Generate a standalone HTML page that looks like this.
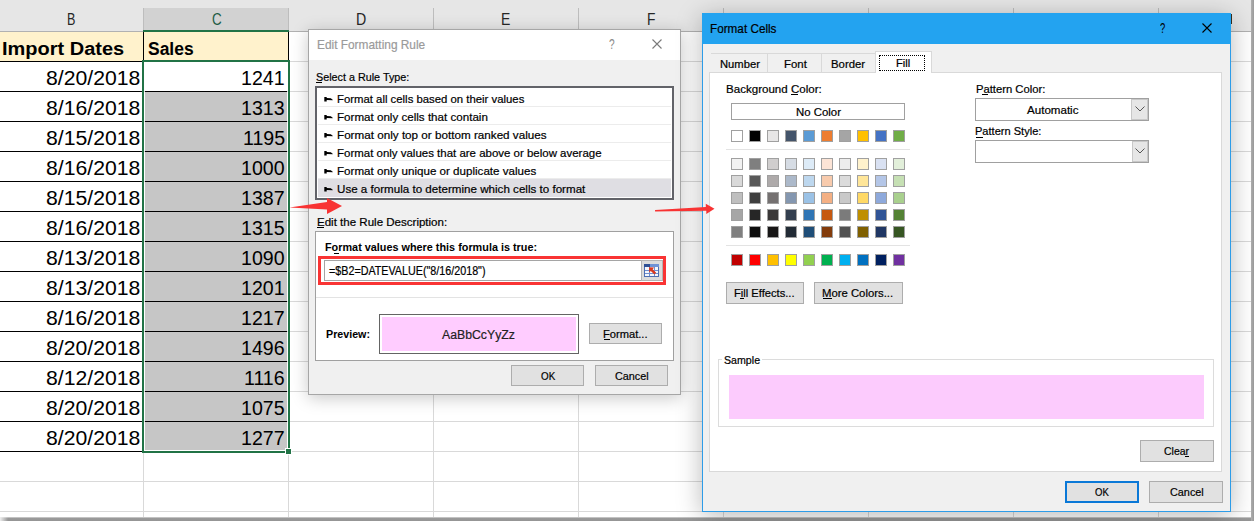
<!DOCTYPE html>
<html><head><meta charset="utf-8"><style>
html,body{margin:0;padding:0;}
body{width:1254px;height:521px;position:relative;overflow:hidden;background:#fff;font-family:'Liberation Sans', sans-serif;}
</style></head><body>
<div style="position:absolute;left:0px;top:0px;width:1254px;height:31px;background:#e6e6e6"></div>
<div style="position:absolute;left:0px;top:31px;width:1254px;height:1px;background:#b1b1b1"></div>
<div style="position:absolute;left:143px;top:8px;width:1px;height:23px;background:#bdbdbd"></div>
<div style="position:absolute;left:288px;top:8px;width:1px;height:23px;background:#bdbdbd"></div>
<div style="position:absolute;left:433px;top:8px;width:1px;height:23px;background:#bdbdbd"></div>
<div style="position:absolute;left:578px;top:8px;width:1px;height:23px;background:#bdbdbd"></div>
<div style="position:absolute;left:723px;top:8px;width:1px;height:23px;background:#bdbdbd"></div>
<div style="position:absolute;left:868px;top:8px;width:1px;height:23px;background:#bdbdbd"></div>
<div style="position:absolute;left:1013px;top:8px;width:1px;height:23px;background:#bdbdbd"></div>
<div style="position:absolute;left:1158px;top:8px;width:1px;height:23px;background:#bdbdbd"></div>
<div style="position:absolute;left:144px;top:8px;width:144px;height:22px;background:#d2d2d2"></div>
<div style="position:absolute;left:143px;top:30px;width:146px;height:2px;background:#217346"></div>
<div style="position:absolute;left:143px;top:32px;width:1px;height:489px;background:#d9d9d9"></div>
<div style="position:absolute;left:288px;top:32px;width:1px;height:489px;background:#d9d9d9"></div>
<div style="position:absolute;left:433px;top:32px;width:1px;height:489px;background:#d9d9d9"></div>
<div style="position:absolute;left:578px;top:32px;width:1px;height:489px;background:#d9d9d9"></div>
<div style="position:absolute;left:723px;top:32px;width:1px;height:489px;background:#d9d9d9"></div>
<div style="position:absolute;left:868px;top:32px;width:1px;height:489px;background:#d9d9d9"></div>
<div style="position:absolute;left:1013px;top:32px;width:1px;height:489px;background:#d9d9d9"></div>
<div style="position:absolute;left:1158px;top:32px;width:1px;height:489px;background:#d9d9d9"></div>
<div style="position:absolute;left:0px;top:61px;width:1254px;height:1px;background:#d9d9d9"></div>
<div style="position:absolute;left:0px;top:91px;width:1254px;height:1px;background:#d9d9d9"></div>
<div style="position:absolute;left:0px;top:121px;width:1254px;height:1px;background:#d9d9d9"></div>
<div style="position:absolute;left:0px;top:151px;width:1254px;height:1px;background:#d9d9d9"></div>
<div style="position:absolute;left:0px;top:181px;width:1254px;height:1px;background:#d9d9d9"></div>
<div style="position:absolute;left:0px;top:211px;width:1254px;height:1px;background:#d9d9d9"></div>
<div style="position:absolute;left:0px;top:241px;width:1254px;height:1px;background:#d9d9d9"></div>
<div style="position:absolute;left:0px;top:271px;width:1254px;height:1px;background:#d9d9d9"></div>
<div style="position:absolute;left:0px;top:301px;width:1254px;height:1px;background:#d9d9d9"></div>
<div style="position:absolute;left:0px;top:331px;width:1254px;height:1px;background:#d9d9d9"></div>
<div style="position:absolute;left:0px;top:361px;width:1254px;height:1px;background:#d9d9d9"></div>
<div style="position:absolute;left:0px;top:391px;width:1254px;height:1px;background:#d9d9d9"></div>
<div style="position:absolute;left:0px;top:421px;width:1254px;height:1px;background:#d9d9d9"></div>
<div style="position:absolute;left:0px;top:451px;width:1254px;height:1px;background:#d9d9d9"></div>
<div style="position:absolute;left:0px;top:481px;width:1254px;height:1px;background:#d9d9d9"></div>
<div style="position:absolute;left:0px;top:511px;width:1254px;height:1px;background:#d9d9d9"></div>
<div id="t0" style="position:absolute;left:67.40px;top:12px;font:15.75px/15.75px 'Liberation Sans', sans-serif;color:#262626;white-space:pre;transform:scaleX(0.8000);transform-origin:0 0;">B<i style="display:inline-block;width:0;height:0"></i></div>
<div id="t1" style="position:absolute;left:211.70px;top:12px;font:15.75px/15.75px 'Liberation Sans', sans-serif;color:#1e5c45;white-space:pre;transform:scaleX(0.8545);transform-origin:0 0;">C<i style="display:inline-block;width:0;height:0"></i></div>
<div id="t2" style="position:absolute;left:356.10px;top:12px;font:15.75px/15.75px 'Liberation Sans', sans-serif;color:#262626;white-space:pre;transform:scaleX(0.9000);transform-origin:0 0;">D<i style="display:inline-block;width:0;height:0"></i></div>
<div id="t3" style="position:absolute;left:501.11px;top:12px;font:15.75px/15.75px 'Liberation Sans', sans-serif;color:#262626;white-space:pre;transform:scaleX(0.8889);transform-origin:0 0;">E<i style="display:inline-block;width:0;height:0"></i></div>
<div id="t4" style="position:absolute;left:647.12px;top:12px;font:15.75px/15.75px 'Liberation Sans', sans-serif;color:#262626;white-space:pre;transform:scaleX(0.8750);transform-origin:0 0;">F<i style="display:inline-block;width:0;height:0"></i></div>
<div style="position:absolute;left:1231px;top:14px;width:1px;height:10px;background:#3a3020"></div>
<div style="position:absolute;left:0px;top:32px;width:143px;height:29px;background:#fff2cc"></div>
<div style="position:absolute;left:144px;top:32px;width:144px;height:29px;background:#fff2cc"></div>
<div style="position:absolute;left:143px;top:32px;width:1px;height:30px;background:#000"></div>
<div style="position:absolute;left:288px;top:32px;width:1px;height:30px;background:#000"></div>
<div style="position:absolute;left:0px;top:61px;width:143px;height:1px;background:#000"></div>
<div id="t5" style="position:absolute;left:1.96px;top:39px;font:bold 19.25px/19.25px 'Liberation Sans', sans-serif;color:#000;white-space:pre;transform:scaleX(1.0383);transform-origin:0 0;">Import Dates<i style="display:inline-block;width:0;height:0"></i></div>
<div id="t6" style="position:absolute;left:147.70px;top:39px;font:bold 19.25px/19.25px 'Liberation Sans', sans-serif;color:#000;white-space:pre;transform:scaleX(0.9073);transform-origin:0 0;">Sales<i style="display:inline-block;width:0;height:0"></i></div>
<div style="position:absolute;left:0px;top:91px;width:143px;height:1px;background:#000"></div>
<div style="position:absolute;left:143px;top:62px;width:145px;height:29px;background:#fff"></div>
<div style="position:absolute;left:145px;top:91px;width:142px;height:1px;background:#000"></div>
<div id="t7" style="position:absolute;left:45.70px;top:68px;font:20.5px/20.5px 'Liberation Sans', sans-serif;color:#000;white-space:pre;transform:scaleX(1.0342);transform-origin:0 0;">8/20/2018<i style="display:inline-block;width:0;height:0"></i></div>
<div id="t8" style="position:absolute;left:241.23px;top:68px;font:20.5px/20.5px 'Liberation Sans', sans-serif;color:#000;white-space:pre;transform:scaleX(0.9550);transform-origin:0 0;">1241<i style="display:inline-block;width:0;height:0"></i></div>
<div style="position:absolute;left:0px;top:121px;width:143px;height:1px;background:#000"></div>
<div style="position:absolute;left:143px;top:92px;width:145px;height:29px;background:#fff"></div>
<div style="position:absolute;left:145px;top:92px;width:142px;height:29px;background:#c6c6c6"></div>
<div style="position:absolute;left:145px;top:121px;width:142px;height:1px;background:#000"></div>
<div id="t9" style="position:absolute;left:45.70px;top:98px;font:20.5px/20.5px 'Liberation Sans', sans-serif;color:#000;white-space:pre;transform:scaleX(1.0342);transform-origin:0 0;">8/16/2018<i style="display:inline-block;width:0;height:0"></i></div>
<div id="t10" style="position:absolute;left:241.23px;top:98px;font:20.5px/20.5px 'Liberation Sans', sans-serif;color:#000;white-space:pre;transform:scaleX(0.9550);transform-origin:0 0;">1313<i style="display:inline-block;width:0;height:0"></i></div>
<div style="position:absolute;left:0px;top:151px;width:143px;height:1px;background:#000"></div>
<div style="position:absolute;left:143px;top:122px;width:145px;height:29px;background:#fff"></div>
<div style="position:absolute;left:145px;top:122px;width:142px;height:29px;background:#c6c6c6"></div>
<div style="position:absolute;left:145px;top:151px;width:142px;height:1px;background:#000"></div>
<div id="t11" style="position:absolute;left:45.70px;top:128px;font:20.5px/20.5px 'Liberation Sans', sans-serif;color:#000;white-space:pre;transform:scaleX(1.0342);transform-origin:0 0;">8/15/2018<i style="display:inline-block;width:0;height:0"></i></div>
<div id="t12" style="position:absolute;left:242.68px;top:128px;font:20.5px/20.5px 'Liberation Sans', sans-serif;color:#000;white-space:pre;transform:scaleX(0.9550);transform-origin:0 0;">1195<i style="display:inline-block;width:0;height:0"></i></div>
<div style="position:absolute;left:0px;top:181px;width:143px;height:1px;background:#000"></div>
<div style="position:absolute;left:143px;top:152px;width:145px;height:29px;background:#fff"></div>
<div style="position:absolute;left:145px;top:152px;width:142px;height:29px;background:#c6c6c6"></div>
<div style="position:absolute;left:145px;top:181px;width:142px;height:1px;background:#000"></div>
<div id="t13" style="position:absolute;left:45.70px;top:158px;font:20.5px/20.5px 'Liberation Sans', sans-serif;color:#000;white-space:pre;transform:scaleX(1.0342);transform-origin:0 0;">8/16/2018<i style="display:inline-block;width:0;height:0"></i></div>
<div id="t14" style="position:absolute;left:241.23px;top:158px;font:20.5px/20.5px 'Liberation Sans', sans-serif;color:#000;white-space:pre;transform:scaleX(0.9550);transform-origin:0 0;">1000<i style="display:inline-block;width:0;height:0"></i></div>
<div style="position:absolute;left:0px;top:211px;width:143px;height:1px;background:#000"></div>
<div style="position:absolute;left:143px;top:182px;width:145px;height:29px;background:#fff"></div>
<div style="position:absolute;left:145px;top:182px;width:142px;height:29px;background:#c6c6c6"></div>
<div style="position:absolute;left:145px;top:211px;width:142px;height:1px;background:#000"></div>
<div id="t15" style="position:absolute;left:45.70px;top:188px;font:20.5px/20.5px 'Liberation Sans', sans-serif;color:#000;white-space:pre;transform:scaleX(1.0342);transform-origin:0 0;">8/15/2018<i style="display:inline-block;width:0;height:0"></i></div>
<div id="t16" style="position:absolute;left:241.23px;top:188px;font:20.5px/20.5px 'Liberation Sans', sans-serif;color:#000;white-space:pre;transform:scaleX(0.9550);transform-origin:0 0;">1387<i style="display:inline-block;width:0;height:0"></i></div>
<div style="position:absolute;left:0px;top:241px;width:143px;height:1px;background:#000"></div>
<div style="position:absolute;left:143px;top:212px;width:145px;height:29px;background:#fff"></div>
<div style="position:absolute;left:145px;top:212px;width:142px;height:29px;background:#c6c6c6"></div>
<div style="position:absolute;left:145px;top:241px;width:142px;height:1px;background:#000"></div>
<div id="t17" style="position:absolute;left:45.70px;top:218px;font:20.5px/20.5px 'Liberation Sans', sans-serif;color:#000;white-space:pre;transform:scaleX(1.0342);transform-origin:0 0;">8/16/2018<i style="display:inline-block;width:0;height:0"></i></div>
<div id="t18" style="position:absolute;left:241.23px;top:218px;font:20.5px/20.5px 'Liberation Sans', sans-serif;color:#000;white-space:pre;transform:scaleX(0.9550);transform-origin:0 0;">1315<i style="display:inline-block;width:0;height:0"></i></div>
<div style="position:absolute;left:0px;top:271px;width:143px;height:1px;background:#000"></div>
<div style="position:absolute;left:143px;top:242px;width:145px;height:29px;background:#fff"></div>
<div style="position:absolute;left:145px;top:242px;width:142px;height:29px;background:#c6c6c6"></div>
<div style="position:absolute;left:145px;top:271px;width:142px;height:1px;background:#000"></div>
<div id="t19" style="position:absolute;left:45.70px;top:248px;font:20.5px/20.5px 'Liberation Sans', sans-serif;color:#000;white-space:pre;transform:scaleX(1.0342);transform-origin:0 0;">8/13/2018<i style="display:inline-block;width:0;height:0"></i></div>
<div id="t20" style="position:absolute;left:241.23px;top:248px;font:20.5px/20.5px 'Liberation Sans', sans-serif;color:#000;white-space:pre;transform:scaleX(0.9550);transform-origin:0 0;">1090<i style="display:inline-block;width:0;height:0"></i></div>
<div style="position:absolute;left:0px;top:301px;width:143px;height:1px;background:#000"></div>
<div style="position:absolute;left:143px;top:272px;width:145px;height:29px;background:#fff"></div>
<div style="position:absolute;left:145px;top:272px;width:142px;height:29px;background:#c6c6c6"></div>
<div style="position:absolute;left:145px;top:301px;width:142px;height:1px;background:#000"></div>
<div id="t21" style="position:absolute;left:45.70px;top:278px;font:20.5px/20.5px 'Liberation Sans', sans-serif;color:#000;white-space:pre;transform:scaleX(1.0342);transform-origin:0 0;">8/13/2018<i style="display:inline-block;width:0;height:0"></i></div>
<div id="t22" style="position:absolute;left:241.23px;top:278px;font:20.5px/20.5px 'Liberation Sans', sans-serif;color:#000;white-space:pre;transform:scaleX(0.9550);transform-origin:0 0;">1201<i style="display:inline-block;width:0;height:0"></i></div>
<div style="position:absolute;left:0px;top:331px;width:143px;height:1px;background:#000"></div>
<div style="position:absolute;left:143px;top:302px;width:145px;height:29px;background:#fff"></div>
<div style="position:absolute;left:145px;top:302px;width:142px;height:29px;background:#c6c6c6"></div>
<div style="position:absolute;left:145px;top:331px;width:142px;height:1px;background:#000"></div>
<div id="t23" style="position:absolute;left:45.70px;top:308px;font:20.5px/20.5px 'Liberation Sans', sans-serif;color:#000;white-space:pre;transform:scaleX(1.0342);transform-origin:0 0;">8/16/2018<i style="display:inline-block;width:0;height:0"></i></div>
<div id="t24" style="position:absolute;left:241.23px;top:308px;font:20.5px/20.5px 'Liberation Sans', sans-serif;color:#000;white-space:pre;transform:scaleX(0.9550);transform-origin:0 0;">1217<i style="display:inline-block;width:0;height:0"></i></div>
<div style="position:absolute;left:0px;top:361px;width:143px;height:1px;background:#000"></div>
<div style="position:absolute;left:143px;top:332px;width:145px;height:29px;background:#fff"></div>
<div style="position:absolute;left:145px;top:332px;width:142px;height:29px;background:#c6c6c6"></div>
<div style="position:absolute;left:145px;top:361px;width:142px;height:1px;background:#000"></div>
<div id="t25" style="position:absolute;left:45.70px;top:338px;font:20.5px/20.5px 'Liberation Sans', sans-serif;color:#000;white-space:pre;transform:scaleX(1.0342);transform-origin:0 0;">8/20/2018<i style="display:inline-block;width:0;height:0"></i></div>
<div id="t26" style="position:absolute;left:241.23px;top:338px;font:20.5px/20.5px 'Liberation Sans', sans-serif;color:#000;white-space:pre;transform:scaleX(0.9550);transform-origin:0 0;">1496<i style="display:inline-block;width:0;height:0"></i></div>
<div style="position:absolute;left:0px;top:391px;width:143px;height:1px;background:#000"></div>
<div style="position:absolute;left:143px;top:362px;width:145px;height:29px;background:#fff"></div>
<div style="position:absolute;left:145px;top:362px;width:142px;height:29px;background:#c6c6c6"></div>
<div style="position:absolute;left:145px;top:391px;width:142px;height:1px;background:#000"></div>
<div id="t27" style="position:absolute;left:45.70px;top:368px;font:20.5px/20.5px 'Liberation Sans', sans-serif;color:#000;white-space:pre;transform:scaleX(1.0342);transform-origin:0 0;">8/12/2018<i style="display:inline-block;width:0;height:0"></i></div>
<div id="t28" style="position:absolute;left:244.14px;top:368px;font:20.5px/20.5px 'Liberation Sans', sans-serif;color:#000;white-space:pre;transform:scaleX(0.9550);transform-origin:0 0;">1116<i style="display:inline-block;width:0;height:0"></i></div>
<div style="position:absolute;left:0px;top:421px;width:143px;height:1px;background:#000"></div>
<div style="position:absolute;left:143px;top:392px;width:145px;height:29px;background:#fff"></div>
<div style="position:absolute;left:145px;top:392px;width:142px;height:29px;background:#c6c6c6"></div>
<div style="position:absolute;left:145px;top:421px;width:142px;height:1px;background:#000"></div>
<div id="t29" style="position:absolute;left:45.70px;top:398px;font:20.5px/20.5px 'Liberation Sans', sans-serif;color:#000;white-space:pre;transform:scaleX(1.0342);transform-origin:0 0;">8/20/2018<i style="display:inline-block;width:0;height:0"></i></div>
<div id="t30" style="position:absolute;left:241.23px;top:398px;font:20.5px/20.5px 'Liberation Sans', sans-serif;color:#000;white-space:pre;transform:scaleX(0.9550);transform-origin:0 0;">1075<i style="display:inline-block;width:0;height:0"></i></div>
<div style="position:absolute;left:0px;top:451px;width:143px;height:1px;background:#000"></div>
<div style="position:absolute;left:143px;top:422px;width:145px;height:29px;background:#fff"></div>
<div style="position:absolute;left:145px;top:422px;width:142px;height:28px;background:#c6c6c6"></div>
<div id="t31" style="position:absolute;left:45.70px;top:428px;font:20.5px/20.5px 'Liberation Sans', sans-serif;color:#000;white-space:pre;transform:scaleX(1.0342);transform-origin:0 0;">8/20/2018<i style="display:inline-block;width:0;height:0"></i></div>
<div id="t32" style="position:absolute;left:241.23px;top:428px;font:20.5px/20.5px 'Liberation Sans', sans-serif;color:#000;white-space:pre;transform:scaleX(0.9550);transform-origin:0 0;">1277<i style="display:inline-block;width:0;height:0"></i></div>
<div style="position:absolute;left:142px;top:60px;width:148px;height:2px;background:#217346"></div>
<div style="position:absolute;left:142px;top:60px;width:2px;height:393px;background:#217346"></div>
<div style="position:absolute;left:288px;top:60px;width:2px;height:388px;background:#217346"></div>
<div style="position:absolute;left:142px;top:451px;width:143px;height:2px;background:#217346"></div>
<div style="position:absolute;left:285px;top:448px;width:7px;height:7px;background:#fff"></div>
<div style="position:absolute;left:286px;top:449px;width:5px;height:5px;background:#217346"></div>
<div style="position:absolute;left:0px;top:517px;width:1254px;height:4px;background:linear-gradient(#d8d8d8,#9a9a9a 35%,#959595)"></div>
<div style="position:absolute;left:0px;top:517px;width:8px;height:4px;background:linear-gradient(90deg,#eeeeee,rgba(238,238,238,0))"></div>
<div style="position:absolute;left:1251px;top:0px;width:3px;height:521px;background:linear-gradient(90deg,#b0b0b0,#9a9a9a)"></div>
<div style="position:absolute;left:308px;top:29px;width:373px;height:366px;box-sizing:border-box;border:1px solid #a6a6a6;background:#f0f0f0;box-shadow:0 3px 16px rgba(0,0,0,0.22)"></div>
<div style="position:absolute;left:309px;top:30px;width:371px;height:30px;background:#fff"></div>
<div id="t33" style="position:absolute;left:316.79px;top:38px;font:13.0px/13.0px 'Liberation Sans', sans-serif;color:#9a9a9a;white-space:pre;transform:scaleX(0.9133);transform-origin:0 0;-webkit-text-stroke:0.2px #9a9a9a;">Edit Formatting Rule<i style="display:inline-block;width:0;height:0"></i></div>
<div id="t34" style="position:absolute;left:609.40px;top:37px;font:14.25px/14.25px 'Liberation Sans', sans-serif;color:#8a8a8a;white-space:pre;transform:scaleX(0.7125);transform-origin:0 0;">?<i style="display:inline-block;width:0;height:0"></i></div>
<svg style="position:absolute;left:652px;top:39px" width="10" height="10"><path d="M0.5 0.5L9.5 9.5M9.5 0.5L0.5 9.5" stroke="#7a7a7a" stroke-width="1.1"/></svg>
<div id="t35" style="position:absolute;left:316.20px;top:72px;font:11.5px/11.5px 'Liberation Sans', sans-serif;color:#000;white-space:pre;transform:scaleX(0.9374);transform-origin:0 0;-webkit-text-stroke:0.2px #000;">Select a Rule Type:<i style="display:inline-block;width:0;height:0"></i></div>
<div style="position:absolute;left:316px;top:82px;width:6px;height:1px;background:#000"></div>
<div style="position:absolute;left:315px;top:86px;width:359px;height:114px;box-sizing:border-box;border:2px solid #626369;background:#fff"></div>
<div style="position:absolute;left:318px;top:179px;width:353px;height:18px;background:#dfdee3"></div>
<div style="position:absolute;left:318px;top:106px;width:353px;height:1px;background:#ececec"></div>
<svg style="position:absolute;left:324px;top:96.5px" width="9" height="5"><path d="M0.3 0.1H2.7V1.1L6.8 1.3L8.7 2.7V3.2L2.7 3.1V4.4H0.3Z" fill="#000"/></svg>
<div id="t36" style="position:absolute;left:336.60px;top:94px;font:11.25px/11.25px 'Liberation Sans', sans-serif;color:#000;white-space:pre;transform:scaleX(1.0087);transform-origin:0 0;-webkit-text-stroke:0.2px #000;">Format all cells based on their values<i style="display:inline-block;width:0;height:0"></i></div>
<div style="position:absolute;left:318px;top:124px;width:353px;height:1px;background:#ececec"></div>
<svg style="position:absolute;left:324px;top:114.5px" width="9" height="5"><path d="M0.3 0.1H2.7V1.1L6.8 1.3L8.7 2.7V3.2L2.7 3.1V4.4H0.3Z" fill="#000"/></svg>
<div id="t37" style="position:absolute;left:336.60px;top:112px;font:11.25px/11.25px 'Liberation Sans', sans-serif;color:#000;white-space:pre;transform:scaleX(1.0311);transform-origin:0 0;-webkit-text-stroke:0.2px #000;">Format only cells that contain<i style="display:inline-block;width:0;height:0"></i></div>
<div style="position:absolute;left:318px;top:142px;width:353px;height:1px;background:#ececec"></div>
<svg style="position:absolute;left:324px;top:132.5px" width="9" height="5"><path d="M0.3 0.1H2.7V1.1L6.8 1.3L8.7 2.7V3.2L2.7 3.1V4.4H0.3Z" fill="#000"/></svg>
<div id="t38" style="position:absolute;left:336.60px;top:130px;font:11.25px/11.25px 'Liberation Sans', sans-serif;color:#000;white-space:pre;transform:scaleX(1.0378);transform-origin:0 0;-webkit-text-stroke:0.2px #000;">Format only top or bottom ranked values<i style="display:inline-block;width:0;height:0"></i></div>
<div style="position:absolute;left:318px;top:160px;width:353px;height:1px;background:#ececec"></div>
<svg style="position:absolute;left:324px;top:150.5px" width="9" height="5"><path d="M0.3 0.1H2.7V1.1L6.8 1.3L8.7 2.7V3.2L2.7 3.1V4.4H0.3Z" fill="#000"/></svg>
<div id="t39" style="position:absolute;left:336.60px;top:148px;font:11.25px/11.25px 'Liberation Sans', sans-serif;color:#000;white-space:pre;transform:scaleX(1.0194);transform-origin:0 0;-webkit-text-stroke:0.2px #000;">Format only values that are above or below average<i style="display:inline-block;width:0;height:0"></i></div>
<div style="position:absolute;left:318px;top:178px;width:353px;height:1px;background:#ececec"></div>
<svg style="position:absolute;left:324px;top:168.5px" width="9" height="5"><path d="M0.3 0.1H2.7V1.1L6.8 1.3L8.7 2.7V3.2L2.7 3.1V4.4H0.3Z" fill="#000"/></svg>
<div id="t40" style="position:absolute;left:336.60px;top:166px;font:11.25px/11.25px 'Liberation Sans', sans-serif;color:#000;white-space:pre;transform:scaleX(1.0315);transform-origin:0 0;-webkit-text-stroke:0.2px #000;">Format only unique or duplicate values<i style="display:inline-block;width:0;height:0"></i></div>
<svg style="position:absolute;left:324px;top:186.5px" width="9" height="5"><path d="M0.3 0.1H2.7V1.1L6.8 1.3L8.7 2.7V3.2L2.7 3.1V4.4H0.3Z" fill="#000"/></svg>
<div id="t41" style="position:absolute;left:336.60px;top:184px;font:11.25px/11.25px 'Liberation Sans', sans-serif;color:#000;white-space:pre;transform:scaleX(1.0315);transform-origin:0 0;-webkit-text-stroke:0.2px #000;">Use a formula to determine which cells to format<i style="display:inline-block;width:0;height:0"></i></div>
<div id="t42" style="position:absolute;left:316.50px;top:217px;font:11.0px/11.0px 'Liberation Sans', sans-serif;color:#000;white-space:pre;transform:scaleX(1.0487);transform-origin:0 0;-webkit-text-stroke:0.2px #000;">Edit the Rule Description:<i style="display:inline-block;width:0;height:0"></i></div>
<div style="position:absolute;left:317px;top:227px;width:7px;height:1px;background:#000"></div>
<div style="position:absolute;left:315px;top:231px;width:359px;height:130px;box-sizing:border-box;border:1px solid #a0a0a0;background:#fff"></div>
<div id="t43" style="position:absolute;left:325.40px;top:242px;font:bold 11.5px/11.5px 'Liberation Sans', sans-serif;color:#000;white-space:pre;transform:scaleX(0.9428);transform-origin:0 0;">Format values where this formula is true:<i style="display:inline-block;width:0;height:0"></i></div>
<div style="position:absolute;left:334px;top:253px;width:5px;height:1px;background:#000"></div>
<div style="position:absolute;left:318px;top:256px;width:348px;height:29px;box-sizing:border-box;border:3px solid #f93434;background:#fff"></div>
<div style="position:absolute;left:324px;top:260px;width:339px;height:21px;box-sizing:border-box;border:1px solid #a5a5a5;background:#fff"></div>
<div id="t44" style="position:absolute;left:329.00px;top:265px;font:12.0px/12.0px 'Liberation Sans', sans-serif;color:#000;white-space:pre;transform:scaleX(0.8951);transform-origin:0 0;-webkit-text-stroke:0.2px #000;">=$B2=DATEVALUE("8/16/2018")<i style="display:inline-block;width:0;height:0"></i></div>
<div style="position:absolute;left:641px;top:260px;width:22px;height:21px;box-sizing:border-box;border:1px solid #b3b3b3;background:#dcdcdc"></div>
<svg style="position:absolute;left:644px;top:264px" width="15" height="13"><rect x="0.5" y="0.5" width="14" height="12" fill="#f4f7fd" stroke="#4d6fb3"/><rect x="0" y="0" width="6" height="3" fill="#2d4f95"/><rect x="6" y="0" width="9" height="3" fill="#6f93d6"/><g fill="#6f8fcf"><rect x="1" y="6" width="13" height="1"/><rect x="1" y="9" width="13" height="1"/><rect x="5" y="3" width="1" height="9"/><rect x="10" y="3" width="1" height="9"/></g><path d="M5 3.2L10.2 3.6L8.6 5.2L12.2 8.8L10.4 10.6L6.8 7L5.2 8.6Z" fill="#d9391f"/></svg>
<div style="position:absolute;left:316px;top:297px;width:357px;height:1px;background:#e3e3e3"></div>
<div id="t45" style="position:absolute;left:325.60px;top:329px;font:bold 11.5px/11.5px 'Liberation Sans', sans-serif;color:#000;white-space:pre;transform:scaleX(0.9296);transform-origin:0 0;">Preview:<i style="display:inline-block;width:0;height:0"></i></div>
<div style="position:absolute;left:379px;top:314px;width:200px;height:40px;box-sizing:border-box;border:1px solid #646464;background:#fff"></div>
<div style="position:absolute;left:382px;top:317px;width:194px;height:34px;background:#ffccff"></div>
<div id="t46" style="position:absolute;left:442.20px;top:328px;font:13.25px/13.25px 'Liberation Sans', sans-serif;color:#222;white-space:pre;transform:scaleX(0.9250);transform-origin:0 0;-webkit-text-stroke:0.2px #222;">AaBbCcYyZz<i style="display:inline-block;width:0;height:0"></i></div>
<div style="position:absolute;left:589px;top:323px;width:73px;height:21px;box-sizing:border-box;border:1px solid #adadad;background:#e1e1e1"></div>
<div id="t47" style="position:absolute;left:603.20px;top:329px;font:11.25px/11.25px 'Liberation Sans', sans-serif;color:#000;white-space:pre;transform:scaleX(0.9893);transform-origin:0 0;-webkit-text-stroke:0.2px #000;">Format...<i style="display:inline-block;width:0;height:0"></i></div>
<div style="position:absolute;left:604px;top:339px;width:6px;height:1px;background:#000"></div>
<div style="position:absolute;left:511px;top:365px;width:73px;height:21px;box-sizing:border-box;border:1px solid #adadad;background:#e1e1e1"></div>
<div id="t48" style="position:absolute;left:540.50px;top:371px;font:11.25px/11.25px 'Liberation Sans', sans-serif;color:#000;white-space:pre;transform:scaleX(0.8716);transform-origin:0 0;-webkit-text-stroke:0.2px #000;">OK<i style="display:inline-block;width:0;height:0"></i></div>
<div style="position:absolute;left:595px;top:365px;width:73px;height:21px;box-sizing:border-box;border:1px solid #adadad;background:#e1e1e1"></div>
<div id="t49" style="position:absolute;left:614.60px;top:371px;font:11.25px/11.25px 'Liberation Sans', sans-serif;color:#000;white-space:pre;transform:scaleX(0.9618);transform-origin:0 0;-webkit-text-stroke:0.2px #000;">Cancel<i style="display:inline-block;width:0;height:0"></i></div>
<div style="position:absolute;left:702px;top:13px;width:529px;height:499px;box-sizing:border-box;border:1px solid #2d9ce8;background:#f0f0f0;box-shadow:0 4px 24px rgba(0,0,0,0.28)"></div>
<div style="position:absolute;left:702px;top:13px;width:529px;height:31px;background:#23a3f0"></div>
<div id="t50" style="position:absolute;left:710.44px;top:23px;font:12.25px/12.25px 'Liberation Sans', sans-serif;color:#000;white-space:pre;transform:scaleX(0.9575);transform-origin:0 0;-webkit-text-stroke:0.2px #000;">Format Cells<i style="display:inline-block;width:0;height:0"></i></div>
<div id="t51" style="position:absolute;left:1159.70px;top:21px;font:14.5px/14.5px 'Liberation Sans', sans-serif;color:#000;white-space:pre;transform:scaleX(0.6500);transform-origin:0 0;">?<i style="display:inline-block;width:0;height:0"></i></div>
<svg style="position:absolute;left:1202px;top:23px" width="10" height="10"><path d="M0.5 0.5L9.5 9.5M9.5 0.5L0.5 9.5" stroke="#000" stroke-width="1.1"/></svg>
<div style="position:absolute;left:711px;top:53px;width:164px;height:1px;background:#d9d9d9"></div>
<div style="position:absolute;left:767px;top:53px;width:1px;height:19px;background:#d9d9d9"></div>
<div style="position:absolute;left:821px;top:53px;width:1px;height:19px;background:#d9d9d9"></div>
<div style="position:absolute;left:709px;top:72px;width:513px;height:400px;box-sizing:border-box;border:1px solid #d9d9d9;background:#fff"></div>
<div style="position:absolute;left:875px;top:51px;width:57px;height:22px;box-sizing:border-box;border:1px solid #d9d9d9;border-bottom:none;background:#fff"></div>
<div style="position:absolute;left:879px;top:55px;width:46px;height:16px;box-sizing:border-box;border:1px dotted #000"></div>
<div id="t52" style="position:absolute;left:719.60px;top:59px;font:10.75px/10.75px 'Liberation Sans', sans-serif;color:#000;white-space:pre;transform:scaleX(1.0426);transform-origin:0 0;-webkit-text-stroke:0.2px #000;">Number<i style="display:inline-block;width:0;height:0"></i></div>
<div id="t53" style="position:absolute;left:783.50px;top:59px;font:10.75px/10.75px 'Liberation Sans', sans-serif;color:#000;white-space:pre;transform:scaleX(1.0639);transform-origin:0 0;-webkit-text-stroke:0.2px #000;">Font<i style="display:inline-block;width:0;height:0"></i></div>
<div id="t54" style="position:absolute;left:831.30px;top:59px;font:10.75px/10.75px 'Liberation Sans', sans-serif;color:#000;white-space:pre;transform:scaleX(1.0555);transform-origin:0 0;-webkit-text-stroke:0.2px #000;">Border<i style="display:inline-block;width:0;height:0"></i></div>
<div id="t55" style="position:absolute;left:895.60px;top:58px;font:10.75px/10.75px 'Liberation Sans', sans-serif;color:#000;white-space:pre;transform:scaleX(1.0342);transform-origin:0 0;-webkit-text-stroke:0.2px #000;">Fill<i style="display:inline-block;width:0;height:0"></i></div>
<div id="t56" style="position:absolute;left:726.40px;top:84px;font:11.0px/11.0px 'Liberation Sans', sans-serif;color:#000;white-space:pre;transform:scaleX(1.0511);transform-origin:0 0;-webkit-text-stroke:0.2px #000;">Background Color:<i style="display:inline-block;width:0;height:0"></i></div>
<div style="position:absolute;left:791px;top:94px;width:7px;height:1px;background:#000"></div>
<div style="position:absolute;left:731px;top:103px;width:174px;height:17px;box-sizing:border-box;border:1px solid #a0a0a0;background:#fff"></div>
<div id="t57" style="position:absolute;left:795.50px;top:107px;font:10.75px/10.75px 'Liberation Sans', sans-serif;color:#000;white-space:pre;transform:scaleX(1.0598);transform-origin:0 0;-webkit-text-stroke:0.2px #000;">No Color<i style="display:inline-block;width:0;height:0"></i></div>
<div style="position:absolute;left:731px;top:130px;width:12px;height:12px;box-sizing:border-box;border:1px solid #a0a0a0;background:#ffffff"></div>
<div style="position:absolute;left:749px;top:130px;width:12px;height:12px;box-sizing:border-box;border:1px solid #a0a0a0;background:#000000"></div>
<div style="position:absolute;left:767px;top:130px;width:12px;height:12px;box-sizing:border-box;border:1px solid #a0a0a0;background:#e7e6e6"></div>
<div style="position:absolute;left:785px;top:130px;width:12px;height:12px;box-sizing:border-box;border:1px solid #a0a0a0;background:#44546a"></div>
<div style="position:absolute;left:803px;top:130px;width:12px;height:12px;box-sizing:border-box;border:1px solid #a0a0a0;background:#5b9bd5"></div>
<div style="position:absolute;left:821px;top:130px;width:12px;height:12px;box-sizing:border-box;border:1px solid #a0a0a0;background:#ed7d31"></div>
<div style="position:absolute;left:839px;top:130px;width:12px;height:12px;box-sizing:border-box;border:1px solid #a0a0a0;background:#a5a5a5"></div>
<div style="position:absolute;left:857px;top:130px;width:12px;height:12px;box-sizing:border-box;border:1px solid #a0a0a0;background:#ffc000"></div>
<div style="position:absolute;left:875px;top:130px;width:12px;height:12px;box-sizing:border-box;border:1px solid #a0a0a0;background:#4472c4"></div>
<div style="position:absolute;left:893px;top:130px;width:12px;height:12px;box-sizing:border-box;border:1px solid #a0a0a0;background:#70ad47"></div>
<div style="position:absolute;left:726px;top:149px;width:184px;height:1px;background:#e3e3e3"></div>
<div style="position:absolute;left:731px;top:158px;width:12px;height:12px;box-sizing:border-box;border:1px solid #a0a0a0;background:#f2f2f2"></div>
<div style="position:absolute;left:749px;top:158px;width:12px;height:12px;box-sizing:border-box;border:1px solid #a0a0a0;background:#7f7f7f"></div>
<div style="position:absolute;left:767px;top:158px;width:12px;height:12px;box-sizing:border-box;border:1px solid #a0a0a0;background:#d0cece"></div>
<div style="position:absolute;left:785px;top:158px;width:12px;height:12px;box-sizing:border-box;border:1px solid #a0a0a0;background:#d6dce4"></div>
<div style="position:absolute;left:803px;top:158px;width:12px;height:12px;box-sizing:border-box;border:1px solid #a0a0a0;background:#ddebf7"></div>
<div style="position:absolute;left:821px;top:158px;width:12px;height:12px;box-sizing:border-box;border:1px solid #a0a0a0;background:#fce4d6"></div>
<div style="position:absolute;left:839px;top:158px;width:12px;height:12px;box-sizing:border-box;border:1px solid #a0a0a0;background:#ededed"></div>
<div style="position:absolute;left:857px;top:158px;width:12px;height:12px;box-sizing:border-box;border:1px solid #a0a0a0;background:#fff2cc"></div>
<div style="position:absolute;left:875px;top:158px;width:12px;height:12px;box-sizing:border-box;border:1px solid #a0a0a0;background:#d9e1f2"></div>
<div style="position:absolute;left:893px;top:158px;width:12px;height:12px;box-sizing:border-box;border:1px solid #a0a0a0;background:#e2efda"></div>
<div style="position:absolute;left:731px;top:175px;width:12px;height:12px;box-sizing:border-box;border:1px solid #a0a0a0;background:#d9d9d9"></div>
<div style="position:absolute;left:749px;top:175px;width:12px;height:12px;box-sizing:border-box;border:1px solid #a0a0a0;background:#595959"></div>
<div style="position:absolute;left:767px;top:175px;width:12px;height:12px;box-sizing:border-box;border:1px solid #a0a0a0;background:#aeaaaa"></div>
<div style="position:absolute;left:785px;top:175px;width:12px;height:12px;box-sizing:border-box;border:1px solid #a0a0a0;background:#acb9ca"></div>
<div style="position:absolute;left:803px;top:175px;width:12px;height:12px;box-sizing:border-box;border:1px solid #a0a0a0;background:#bdd7ee"></div>
<div style="position:absolute;left:821px;top:175px;width:12px;height:12px;box-sizing:border-box;border:1px solid #a0a0a0;background:#f8cbad"></div>
<div style="position:absolute;left:839px;top:175px;width:12px;height:12px;box-sizing:border-box;border:1px solid #a0a0a0;background:#dbdbdb"></div>
<div style="position:absolute;left:857px;top:175px;width:12px;height:12px;box-sizing:border-box;border:1px solid #a0a0a0;background:#ffe699"></div>
<div style="position:absolute;left:875px;top:175px;width:12px;height:12px;box-sizing:border-box;border:1px solid #a0a0a0;background:#b4c6e7"></div>
<div style="position:absolute;left:893px;top:175px;width:12px;height:12px;box-sizing:border-box;border:1px solid #a0a0a0;background:#c6e0b4"></div>
<div style="position:absolute;left:731px;top:192px;width:12px;height:12px;box-sizing:border-box;border:1px solid #a0a0a0;background:#bfbfbf"></div>
<div style="position:absolute;left:749px;top:192px;width:12px;height:12px;box-sizing:border-box;border:1px solid #a0a0a0;background:#3f3f3f"></div>
<div style="position:absolute;left:767px;top:192px;width:12px;height:12px;box-sizing:border-box;border:1px solid #a0a0a0;background:#757171"></div>
<div style="position:absolute;left:785px;top:192px;width:12px;height:12px;box-sizing:border-box;border:1px solid #a0a0a0;background:#8497b0"></div>
<div style="position:absolute;left:803px;top:192px;width:12px;height:12px;box-sizing:border-box;border:1px solid #a0a0a0;background:#9bc2e6"></div>
<div style="position:absolute;left:821px;top:192px;width:12px;height:12px;box-sizing:border-box;border:1px solid #a0a0a0;background:#f4b084"></div>
<div style="position:absolute;left:839px;top:192px;width:12px;height:12px;box-sizing:border-box;border:1px solid #a0a0a0;background:#c9c9c9"></div>
<div style="position:absolute;left:857px;top:192px;width:12px;height:12px;box-sizing:border-box;border:1px solid #a0a0a0;background:#ffd966"></div>
<div style="position:absolute;left:875px;top:192px;width:12px;height:12px;box-sizing:border-box;border:1px solid #a0a0a0;background:#8ea9db"></div>
<div style="position:absolute;left:893px;top:192px;width:12px;height:12px;box-sizing:border-box;border:1px solid #a0a0a0;background:#a9d08e"></div>
<div style="position:absolute;left:731px;top:209px;width:12px;height:12px;box-sizing:border-box;border:1px solid #a0a0a0;background:#a6a6a6"></div>
<div style="position:absolute;left:749px;top:209px;width:12px;height:12px;box-sizing:border-box;border:1px solid #a0a0a0;background:#262626"></div>
<div style="position:absolute;left:767px;top:209px;width:12px;height:12px;box-sizing:border-box;border:1px solid #a0a0a0;background:#3a3838"></div>
<div style="position:absolute;left:785px;top:209px;width:12px;height:12px;box-sizing:border-box;border:1px solid #a0a0a0;background:#333f4f"></div>
<div style="position:absolute;left:803px;top:209px;width:12px;height:12px;box-sizing:border-box;border:1px solid #a0a0a0;background:#2f75b5"></div>
<div style="position:absolute;left:821px;top:209px;width:12px;height:12px;box-sizing:border-box;border:1px solid #a0a0a0;background:#c65911"></div>
<div style="position:absolute;left:839px;top:209px;width:12px;height:12px;box-sizing:border-box;border:1px solid #a0a0a0;background:#7b7b7b"></div>
<div style="position:absolute;left:857px;top:209px;width:12px;height:12px;box-sizing:border-box;border:1px solid #a0a0a0;background:#bf8f00"></div>
<div style="position:absolute;left:875px;top:209px;width:12px;height:12px;box-sizing:border-box;border:1px solid #a0a0a0;background:#305496"></div>
<div style="position:absolute;left:893px;top:209px;width:12px;height:12px;box-sizing:border-box;border:1px solid #a0a0a0;background:#548235"></div>
<div style="position:absolute;left:731px;top:226px;width:12px;height:12px;box-sizing:border-box;border:1px solid #a0a0a0;background:#808080"></div>
<div style="position:absolute;left:749px;top:226px;width:12px;height:12px;box-sizing:border-box;border:1px solid #a0a0a0;background:#0d0d0d"></div>
<div style="position:absolute;left:767px;top:226px;width:12px;height:12px;box-sizing:border-box;border:1px solid #a0a0a0;background:#171616"></div>
<div style="position:absolute;left:785px;top:226px;width:12px;height:12px;box-sizing:border-box;border:1px solid #a0a0a0;background:#222b35"></div>
<div style="position:absolute;left:803px;top:226px;width:12px;height:12px;box-sizing:border-box;border:1px solid #a0a0a0;background:#1f4e78"></div>
<div style="position:absolute;left:821px;top:226px;width:12px;height:12px;box-sizing:border-box;border:1px solid #a0a0a0;background:#833c0c"></div>
<div style="position:absolute;left:839px;top:226px;width:12px;height:12px;box-sizing:border-box;border:1px solid #a0a0a0;background:#525252"></div>
<div style="position:absolute;left:857px;top:226px;width:12px;height:12px;box-sizing:border-box;border:1px solid #a0a0a0;background:#806000"></div>
<div style="position:absolute;left:875px;top:226px;width:12px;height:12px;box-sizing:border-box;border:1px solid #a0a0a0;background:#203764"></div>
<div style="position:absolute;left:893px;top:226px;width:12px;height:12px;box-sizing:border-box;border:1px solid #a0a0a0;background:#375623"></div>
<div style="position:absolute;left:726px;top:245px;width:184px;height:1px;background:#e3e3e3"></div>
<div style="position:absolute;left:731px;top:254px;width:12px;height:12px;box-sizing:border-box;border:1px solid #a0a0a0;background:#c00000"></div>
<div style="position:absolute;left:749px;top:254px;width:12px;height:12px;box-sizing:border-box;border:1px solid #a0a0a0;background:#ff0000"></div>
<div style="position:absolute;left:767px;top:254px;width:12px;height:12px;box-sizing:border-box;border:1px solid #a0a0a0;background:#ffc000"></div>
<div style="position:absolute;left:785px;top:254px;width:12px;height:12px;box-sizing:border-box;border:1px solid #a0a0a0;background:#ffff00"></div>
<div style="position:absolute;left:803px;top:254px;width:12px;height:12px;box-sizing:border-box;border:1px solid #a0a0a0;background:#92d050"></div>
<div style="position:absolute;left:821px;top:254px;width:12px;height:12px;box-sizing:border-box;border:1px solid #a0a0a0;background:#00b050"></div>
<div style="position:absolute;left:839px;top:254px;width:12px;height:12px;box-sizing:border-box;border:1px solid #a0a0a0;background:#00b0f0"></div>
<div style="position:absolute;left:857px;top:254px;width:12px;height:12px;box-sizing:border-box;border:1px solid #a0a0a0;background:#0070c0"></div>
<div style="position:absolute;left:875px;top:254px;width:12px;height:12px;box-sizing:border-box;border:1px solid #a0a0a0;background:#002060"></div>
<div style="position:absolute;left:893px;top:254px;width:12px;height:12px;box-sizing:border-box;border:1px solid #a0a0a0;background:#7030a0"></div>
<div style="position:absolute;left:726px;top:282px;width:78px;height:22px;box-sizing:border-box;border:1px solid #adadad;background:#e1e1e1"></div>
<div id="t58" style="position:absolute;left:734.30px;top:288px;font:11.5px/11.5px 'Liberation Sans', sans-serif;color:#000;white-space:pre;transform:scaleX(0.9692);transform-origin:0 0;-webkit-text-stroke:0.2px #000;">Fill Effects...<i style="display:inline-block;width:0;height:0"></i></div>
<div style="position:absolute;left:740px;top:298px;width:4px;height:1px;background:#000"></div>
<div style="position:absolute;left:814px;top:282px;width:89px;height:22px;box-sizing:border-box;border:1px solid #adadad;background:#e1e1e1"></div>
<div id="t59" style="position:absolute;left:822.30px;top:288px;font:11.5px/11.5px 'Liberation Sans', sans-serif;color:#000;white-space:pre;transform:scaleX(0.9845);transform-origin:0 0;-webkit-text-stroke:0.2px #000;">More Colors...<i style="display:inline-block;width:0;height:0"></i></div>
<div style="position:absolute;left:823px;top:298px;width:9px;height:1px;background:#000"></div>
<div id="t60" style="position:absolute;left:975.70px;top:84px;font:11.0px/11.0px 'Liberation Sans', sans-serif;color:#000;white-space:pre;transform:scaleX(1.0220);transform-origin:0 0;-webkit-text-stroke:0.2px #000;">Pattern Color:<i style="display:inline-block;width:0;height:0"></i></div>
<div style="position:absolute;left:982px;top:94px;width:6px;height:1px;background:#000"></div>
<div style="position:absolute;left:975px;top:98px;width:174px;height:23px;box-sizing:border-box;border:1px solid #a0a0a0;background:#fff"></div>
<div style="position:absolute;left:1131px;top:99px;width:17px;height:21px;box-sizing:border-box;border:1px solid #c8c8c8;background:#e6e6e6"></div>
<svg style="position:absolute;left:1135px;top:106px" width="10" height="6"><path d="M0.5 0.5L5 5L9.5 0.5" stroke="#555" stroke-width="1" fill="none"/></svg>
<div id="t61" style="position:absolute;left:1027.00px;top:105px;font:11.0px/11.0px 'Liberation Sans', sans-serif;color:#000;white-space:pre;transform:scaleX(1.0524);transform-origin:0 0;-webkit-text-stroke:0.2px #000;">Automatic<i style="display:inline-block;width:0;height:0"></i></div>
<div id="t62" style="position:absolute;left:975.20px;top:126px;font:11.0px/11.0px 'Liberation Sans', sans-serif;color:#000;white-space:pre;transform:scaleX(1.0049);transform-origin:0 0;-webkit-text-stroke:0.2px #000;">Pattern Style:<i style="display:inline-block;width:0;height:0"></i></div>
<div style="position:absolute;left:976px;top:137px;width:7px;height:1px;background:#000"></div>
<div style="position:absolute;left:975px;top:140px;width:174px;height:23px;box-sizing:border-box;border:1px solid #a0a0a0;background:#fff"></div>
<div style="position:absolute;left:1132px;top:141px;width:16px;height:21px;box-sizing:border-box;border:1px solid #c8c8c8;background:#e6e6e6"></div>
<svg style="position:absolute;left:1135px;top:148px" width="10" height="6"><path d="M0.5 0.5L5 5L9.5 0.5" stroke="#555" stroke-width="1" fill="none"/></svg>
<div style="position:absolute;left:718px;top:359px;width:496px;height:68px;box-sizing:border-box;border:1px solid #dcdcdc"></div>
<div style="position:absolute;left:722px;top:354px;width:40px;height:10px;background:#fff"></div>
<div id="t63" style="position:absolute;left:724.40px;top:355px;font:10.5px/10.5px 'Liberation Sans', sans-serif;color:#000;white-space:pre;transform:scaleX(1.0122);transform-origin:0 0;-webkit-text-stroke:0.2px #000;">Sample<i style="display:inline-block;width:0;height:0"></i></div>
<div style="position:absolute;left:729px;top:375px;width:475px;height:44px;background:#fccbfd"></div>
<div style="position:absolute;left:1140px;top:440px;width:74px;height:22px;box-sizing:border-box;border:1px solid #adadad;background:#e1e1e1"></div>
<div id="t64" style="position:absolute;left:1164.40px;top:446px;font:10.75px/10.75px 'Liberation Sans', sans-serif;color:#000;white-space:pre;transform:scaleX(0.9767);transform-origin:0 0;-webkit-text-stroke:0.2px #000;">Clear<i style="display:inline-block;width:0;height:0"></i></div>
<div style="position:absolute;left:1185px;top:456px;width:4px;height:1px;background:#000"></div>
<div style="position:absolute;left:1065px;top:481px;width:74px;height:22px;box-sizing:border-box;border:2px solid #0a78d7;background:#e1e1e1"></div>
<div id="t65" style="position:absolute;left:1094.60px;top:487px;font:11.25px/11.25px 'Liberation Sans', sans-serif;color:#000;white-space:pre;transform:scaleX(0.8477);transform-origin:0 0;-webkit-text-stroke:0.2px #000;">OK<i style="display:inline-block;width:0;height:0"></i></div>
<div style="position:absolute;left:1149px;top:481px;width:74px;height:22px;box-sizing:border-box;border:1px solid #adadad;background:#e1e1e1"></div>
<div id="t66" style="position:absolute;left:1169.50px;top:487px;font:11.25px/11.25px 'Liberation Sans', sans-serif;color:#000;white-space:pre;transform:scaleX(0.9647);transform-origin:0 0;-webkit-text-stroke:0.2px #000;">Cancel<i style="display:inline-block;width:0;height:0"></i></div>
<svg style="position:absolute;left:285px;top:195px" width="62" height="22"><path d="M4.5 12.5L42 7L42 3L57 11L42 19L42 14.5Z" fill="#f83333"/></svg>
<svg style="position:absolute;left:650px;top:200px" width="70" height="18"><path d="M5.2 9.9L55.8 7L55.8 3.8L64.5 8.8L56.3 13.9L56.3 10.8L5.2 11.5Q4.6 10.7 5.2 9.9Z" fill="#f83333"/></svg>
</body></html>
